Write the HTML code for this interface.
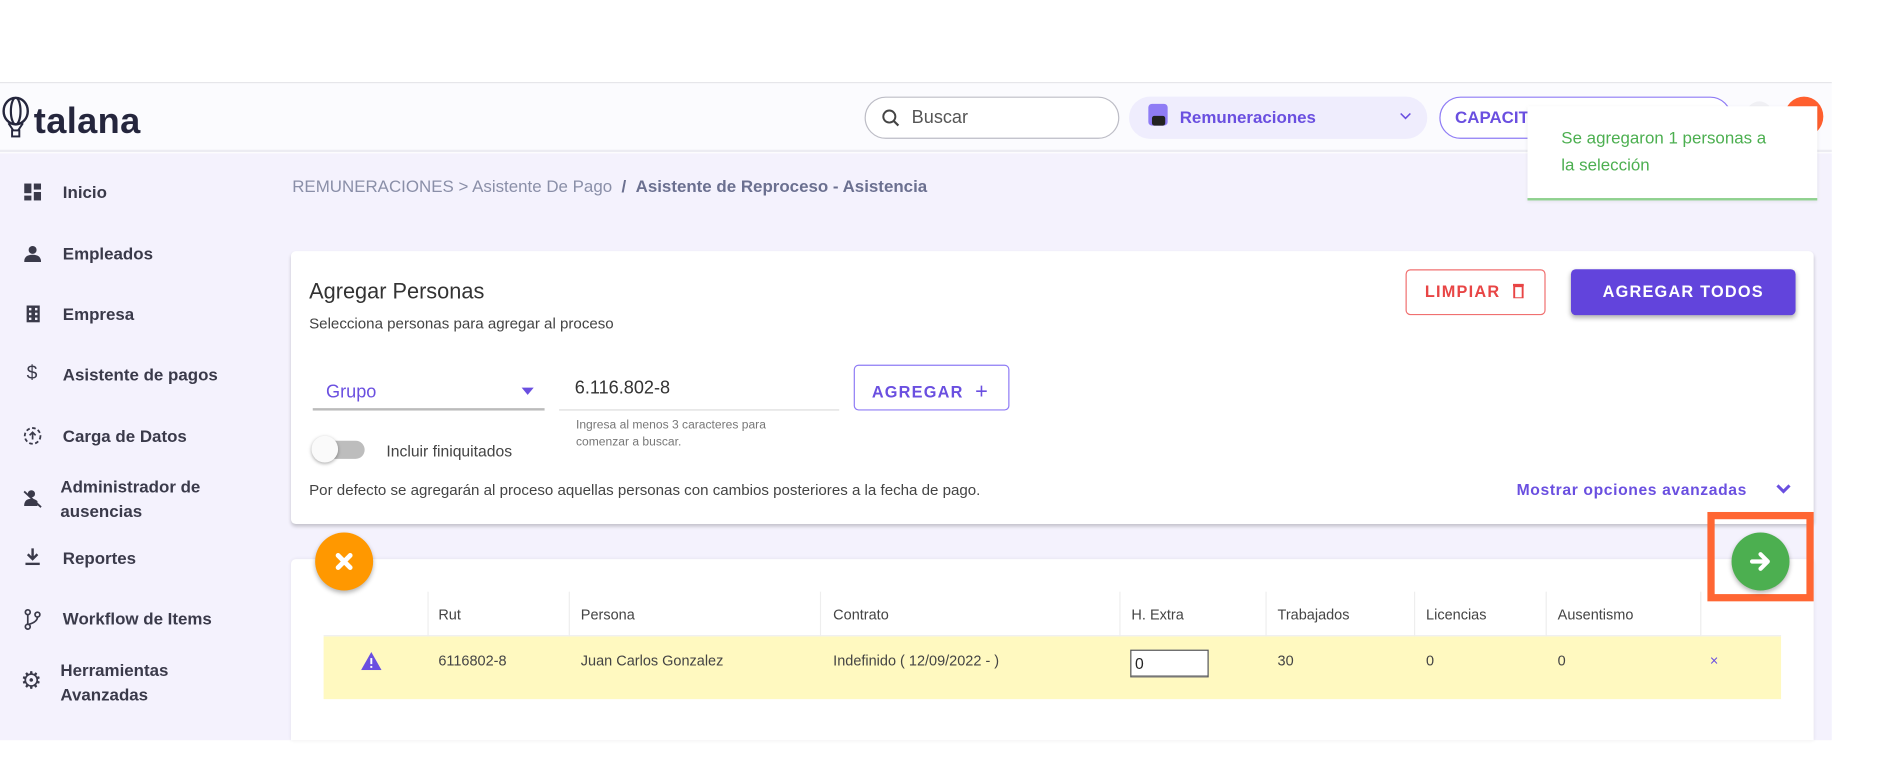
<!DOCTYPE html>
<html><head><meta charset="utf-8"><style>
*{box-sizing:border-box;margin:0;padding:0}
html,body{width:1893px;height:772px;overflow:hidden;background:#fff;font-family:"Liberation Sans",sans-serif}
#w{position:absolute;left:0;top:0;width:1570px;height:640px;transform:scale(1.2075);transform-origin:0 0}
.a{position:absolute}
.side{color:#3a3a4a;font-size:14px;font-weight:bold}
.th{position:absolute;top:502px;font-size:12px;color:#444}
.td{position:absolute;top:540px;font-size:12px;color:#444}
.vd{position:absolute;top:490px;height:37px;width:1px;background:#eee}
</style></head><body><div id="w">
<div class="a" style="left:0;top:68px;width:1517px;height:1px;background:#e3e3e8"></div>
<div class="a" style="left:0;top:69px;width:1517px;height:57px;background:#fbfbfe;border-bottom:2px solid #ececf2"></div>
<div class="a" style="left:0;top:127px;width:1517px;height:486px;background:#f4f2fd"></div>
<svg class="a" style="left:1px;top:80px" width="28" height="36" viewBox="0 0 28 36"><ellipse cx="12" cy="12" rx="10" ry="11" fill="none" stroke="#25263d" stroke-width="2"/><ellipse cx="12" cy="12" rx="4" ry="11" fill="none" stroke="#25263d" stroke-width="1.8"/><path d="M6 22 L10 28 M18 22 L14 28" stroke="#25263d" stroke-width="1.6"/><rect x="9" y="28" width="6" height="5" fill="none" stroke="#25263d" stroke-width="1.6"/></svg>
<div class="a" style="left:28px;top:84px;font-size:30px;font-weight:bold;color:#25263d;letter-spacing:0.3px">talana</div>
<div class="a" style="left:716px;top:80px;width:211px;height:35px;border:1px solid #bdbdc6;border-radius:18px;background:#fff"></div>
<svg class="a" style="left:730px;top:90px" width="16" height="16"><circle cx="6.5" cy="6.5" r="5" fill="none" stroke="#444" stroke-width="1.6"/><path d="M10 10 L14 14" stroke="#444" stroke-width="1.8"/></svg>
<div class="a" style="left:755px;top:89px;font-size:15px;color:#555">Buscar</div>
<div class="a" style="left:935px;top:80px;width:247px;height:35px;border-radius:18px;background:#efedfd"></div>
<div class="a" style="left:951px;top:86px;width:16px;height:18px;background:#8f7cf5;border-radius:3px"></div>
<div class="a" style="left:954px;top:96px;width:11px;height:8px;background:#222;border-radius:2px"></div>
<div class="a" style="left:977px;top:89px;font-size:14px;font-weight:bold;color:#6a4fe0">Remuneraciones</div>
<svg class="a" style="left:1159px;top:93px" width="10" height="7"><path d="M1 1 L5 5 L9 1" stroke="#6a4fe0" stroke-width="1.3" fill="none"/></svg>
<div class="a" style="left:1192px;top:80px;width:242px;height:35px;border:1px solid #8f7cf5;border-radius:18px;background:#fff"></div>
<div class="a" style="left:1205px;top:89px;font-size:14px;font-weight:bold;color:#6a4fe0">CAPACIT</div>
<div class="a" style="left:1446px;top:84px;width:22px;height:22px;border-radius:50%;background:#f0f0f4"></div>
<div class="a" style="left:1478px;top:80px;width:32px;height:33px;border-radius:50%;background:#ff5f2e"></div>
<div class="a" style="left:1265px;top:88px;width:240px;height:78px;background:#fff;border-bottom:2px solid #8fd18f;box-shadow:0 1px 3px rgba(0,0,0,.08)"></div>
<div class="a" style="left:1293px;top:103px;font-size:14px;color:#4caf50;line-height:22px">Se agregaron 1 personas a<br>la selección</div>
<svg class="a" style="left:20px;top:152px" width="14" height="14"><rect x="0" y="0" width="6" height="8" fill="#3a3a4a"/><rect x="8" y="0" width="6" height="5" fill="#3a3a4a"/><rect x="0" y="10" width="6" height="4" fill="#3a3a4a"/><rect x="8" y="7" width="6" height="7" fill="#3a3a4a"/></svg>
<div class="a side" style="left:52px;top:151px">Inicio</div>
<svg class="a" style="left:20px;top:203px" width="14" height="14"><circle cx="7" cy="4" r="3.3" fill="#3a3a4a"/><path d="M0 14 Q0 8 7 8 Q14 8 14 14Z" fill="#3a3a4a"/></svg>
<div class="a side" style="left:52px;top:202px">Empleados</div>
<svg class="a" style="left:22px;top:253px" width="11" height="14"><rect x="0" y="0" width="11" height="14" fill="#3a3a4a"/><g fill="#f4f2fd"><rect x="2" y="2" width="2" height="2"/><rect x="7" y="2" width="2" height="2"/><rect x="2" y="6" width="2" height="2"/><rect x="7" y="6" width="2" height="2"/><rect x="2" y="10" width="2" height="2"/><rect x="7" y="10" width="2" height="2"/></g></svg>
<div class="a side" style="left:52px;top:252px">Empresa</div>
<div class="a" style="left:22px;top:301px;font-size:16px;color:#3a3a4a">$</div>
<div class="a side" style="left:52px;top:302px">Asistente de pagos</div>
<svg class="a" style="left:19px;top:353px" width="16" height="16"><circle cx="8" cy="8" r="6.5" fill="none" stroke="#3a3a4a" stroke-width="1.5" stroke-dasharray="3 2"/><path d="M8 11 V5 M5.5 7.5 L8 5 L10.5 7.5" stroke="#3a3a4a" stroke-width="1.4" fill="none"/></svg>
<div class="a side" style="left:52px;top:353px">Carga de Datos</div>
<svg class="a" style="left:19px;top:405px" width="16" height="16"><circle cx="7" cy="4" r="3" fill="#3a3a4a"/><path d="M1 14 Q1 8 7 8 Q10 8 12 10 L12 14Z" fill="#3a3a4a"/><path d="M1 2 L15 15" stroke="#3a3a4a" stroke-width="1.5"/></svg>
<div class="a side" style="left:50px;top:393px;line-height:20px">Administrador de<br>ausencias</div>
<svg class="a" style="left:21px;top:454px" width="12" height="14"><path d="M6 0 V9 M2 5 L6 9 L10 5" stroke="#3a3a4a" stroke-width="2" fill="none"/><rect x="0" y="12" width="12" height="2" fill="#3a3a4a"/></svg>
<div class="a side" style="left:52px;top:454px">Reportes</div>
<svg class="a" style="left:20px;top:504px" width="14" height="18"><circle cx="3" cy="3" r="2" fill="none" stroke="#3a3a4a" stroke-width="1.4"/><circle cx="3" cy="15" r="2" fill="none" stroke="#3a3a4a" stroke-width="1.4"/><circle cx="11" cy="5" r="2" fill="none" stroke="#3a3a4a" stroke-width="1.4"/><path d="M3 5 V13 M11 7 Q11 11 4 13" stroke="#3a3a4a" stroke-width="1.4" fill="none"/></svg>
<div class="a side" style="left:52px;top:504px">Workflow de Items</div>
<div class="a" style="left:17px;top:551px;font-size:20px;color:#3a3a4a">&#9881;</div>
<div class="a side" style="left:50px;top:545px;line-height:20px">Herramientas<br>Avanzadas</div>
<div class="a" style="left:242px;top:146px;font-size:14px;color:#8a8fa8">REMUNERACIONES &gt; Asistente De Pago &nbsp;<b style="color:#6b7090">/ &nbsp;Asistente de Reproceso - Asistencia</b></div>
<div class="a" style="left:241px;top:208px;width:1261px;height:226px;background:#fff;border-radius:4px;box-shadow:0 2px 3px rgba(0,0,0,.2)"></div>
<div class="a" style="left:256px;top:231px;font-size:18px;color:#333">Agregar Personas</div>
<div class="a" style="left:256px;top:261px;font-size:12.5px;color:#444">Selecciona personas para agregar al proceso</div>
<div class="a" style="left:1164px;top:223px;width:116px;height:38px;border:1px solid #f07070;border-radius:4px"></div>
<div class="a" style="left:1180px;top:234px;font-size:13.5px;font-weight:bold;color:#e84545;letter-spacing:1px">LIMPIAR</div>
<svg class="a" style="left:1253px;top:235px" width="9" height="12"><rect x="1" y="2" width="7" height="10" fill="none" stroke="#e84545" stroke-width="1.6"/><rect x="0" y="0" width="9" height="2" fill="#e84545"/></svg>
<div class="a" style="left:1301px;top:223px;width:186px;height:38px;background:#6244dc;border-radius:4px;box-shadow:0 2px 4px rgba(0,0,0,.3)"></div>
<div class="a" style="left:1301px;top:234px;width:186px;text-align:center;font-size:13.5px;font-weight:bold;color:#fff;letter-spacing:1px">AGREGAR TODOS</div>
<div class="a" style="left:259px;top:338px;width:192px;height:2px;background:#bbb"></div>
<div class="a" style="left:270px;top:316px;font-size:15px;color:#6a4fe0">Grupo</div>
<div class="a" style="left:432px;top:321px;width:0;height:0;border-left:5px solid transparent;border-right:5px solid transparent;border-top:6px solid #6a4fe0"></div>
<div class="a" style="left:463px;top:339px;width:232px;height:1px;background:#ddd"></div>
<div class="a" style="left:476px;top:313px;font-size:15px;color:#333">6.116.802-8</div>
<div class="a" style="left:477px;top:346px;font-size:10px;color:#777;line-height:14px">Ingresa al menos 3 caracteres para<br>comenzar a buscar.</div>
<div class="a" style="left:707px;top:302px;width:129px;height:38px;border:1px solid #8f7cf5;border-radius:4px"></div>
<div class="a" style="left:722px;top:313px;font-size:13.5px;font-weight:bold;color:#6a4fe0;letter-spacing:1px">AGREGAR &nbsp;<span style="font-size:18px;font-weight:normal;position:relative;top:1px">+</span></div>
<div class="a" style="left:260px;top:365px;width:42px;height:15px;border-radius:8px;background:#bdbdbd"></div>
<div class="a" style="left:258px;top:361px;width:22px;height:22px;border-radius:50%;background:#fafafa;box-shadow:0 1px 3px rgba(0,0,0,.35)"></div>
<div class="a" style="left:320px;top:366px;font-size:13px;color:#444">Incluir finiquitados</div>
<div class="a" style="left:256px;top:399px;font-size:12.5px;color:#444">Por defecto se agregarán al proceso aquellas personas con cambios posteriores a la fecha de pago.</div>
<div class="a" style="left:1256px;top:398px;font-size:13px;font-weight:bold;color:#6a4fe0;letter-spacing:.5px">Mostrar opciones avanzadas</div>
<svg class="a" style="left:1470px;top:400px" width="14" height="10"><path d="M2 2 L7 7 L12 2" stroke="#6a4fe0" stroke-width="2.5" fill="none"/></svg>
<div class="a" style="left:241px;top:463px;width:1261px;height:150px;background:#fff;border-radius:4px 4px 0 0;box-shadow:0 0 3px rgba(0,0,0,.08)"></div>
<div class="a" style="left:268px;top:527px;width:1207px;height:52px;background:#fff9c0"></div>
<div class="a" style="left:268px;top:526px;width:1207px;height:1px;background:#eee"></div>
<div class="vd" style="left:354px"></div><div class="vd" style="left:471px"></div><div class="vd" style="left:679px"></div><div class="vd" style="left:927px"></div><div class="vd" style="left:1048px"></div><div class="vd" style="left:1171px"></div><div class="vd" style="left:1280px"></div><div class="vd" style="left:1408px"></div>
<div class="th" style="left:363px">Rut</div><div class="th" style="left:481px">Persona</div><div class="th" style="left:690px">Contrato</div><div class="th" style="left:937px">H. Extra</div><div class="th" style="left:1058px">Trabajados</div><div class="th" style="left:1181px">Licencias</div><div class="th" style="left:1290px">Ausentismo</div>
<svg class="a" style="left:299px;top:540px" width="17" height="15"><path d="M8.5 0 L17 15 L0 15Z" fill="#6a4fe0"/><rect x="7.7" y="5" width="1.6" height="5" fill="#fff"/><rect x="7.7" y="11.5" width="1.6" height="1.6" fill="#fff"/></svg>
<div class="td" style="left:363px">6116802-8</div><div class="td" style="left:481px">Juan Carlos Gonzalez</div><div class="td" style="left:690px">Indefinido ( 12/09/2022 - )</div>
<div class="a" style="left:936px;top:538px;width:65px;height:23px;background:#fff;border:1px solid #555;box-shadow:inset 0 -1px 0 #aaa"></div>
<div class="a" style="left:940px;top:542px;font-size:13px;color:#222">0</div>
<div class="td" style="left:1058px">30</div><div class="td" style="left:1181px">0</div><div class="td" style="left:1290px">0</div><div class="td" style="left:1416px;color:#6a4fe0">×</div>
<div class="a" style="left:261px;top:441px;width:48px;height:48px;border-radius:50%;background:#ff9800;box-shadow:0 2px 4px rgba(0,0,0,.3)"></div>
<svg class="a" style="left:277px;top:457px" width="16" height="16"><path d="M3 3 L13 13 M13 3 L3 13" stroke="#fff" stroke-width="4" stroke-linecap="round"/></svg>
<div class="a" style="left:1414px;top:424px;width:88px;height:74px;border:6px solid #ff6633"></div>
<div class="a" style="left:1434px;top:441px;width:48px;height:48px;border-radius:50%;background:#4caf50;box-shadow:0 2px 4px rgba(0,0,0,.3)"></div>
<svg class="a" style="left:1448px;top:455px" width="20" height="20"><path d="M3 10 H15 M10 4 L16 10 L10 16" stroke="#fff" stroke-width="3.5" fill="none" stroke-linecap="round" stroke-linejoin="round"/></svg>
</div></body></html>
